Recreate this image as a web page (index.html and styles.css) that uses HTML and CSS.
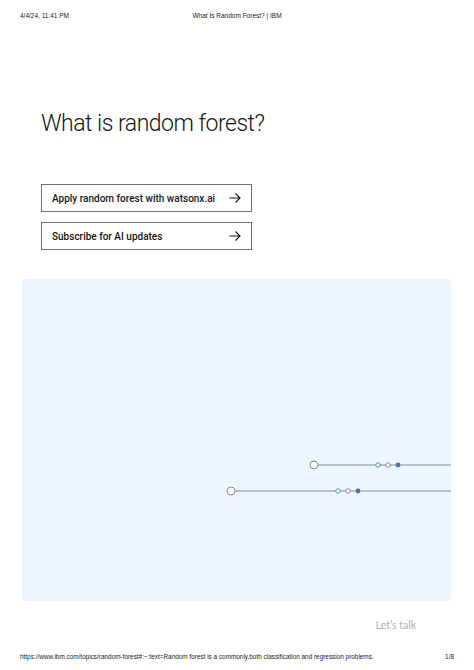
FILE: index.html
```html
<!DOCTYPE html>
<html>
<head>
<meta charset="utf-8">
<link rel="stylesheet" href="styles.css">
</head>
<body>
<div class="page">
  <header class="print-head">
    <span class="date">4/4/24, 11:41 PM</span>
    <span class="doc-title">What Is Random Forest? | IBM</span>
    <span class="spacer"></span>
  </header>
  <main class="content">
    <h1 class="title">What is random forest?</h1>
    <div class="actions">
      <a class="cta" href="#"><span>Apply random forest with watsonx.ai</span>
        <svg class="arrow" width="12" height="10" viewBox="0 0 12 10"><path d="M0.5 5H11M6.5 0.5L11 5L6.5 9.5" fill="none" stroke="#161616" stroke-width="1.1"/></svg></a>
      <a class="cta" href="#"><span>Subscribe for AI updates</span>
        <svg class="arrow" width="12" height="10" viewBox="0 0 12 10"><path d="M0.5 5H11M6.5 0.5L11 5L6.5 9.5" fill="none" stroke="#161616" stroke-width="1.1"/></svg></a>
    </div>
    <div class="hero">
      <svg class="lines" width="429" height="322" viewBox="0 0 429 322">
        <line x1="296" y1="186" x2="429" y2="186" stroke="#8d8d8d" stroke-width="1"/>
        <circle cx="292" cy="186" r="4" fill="#fff" stroke="#8d8d8d" stroke-width="1"/>
        <circle cx="356" cy="186" r="2.2" fill="#fff" stroke="#3f9f9a" stroke-width="1"/>
        <circle cx="366" cy="186" r="2.2" fill="#fff" stroke="#8d8d8d" stroke-width="1"/>
        <circle cx="376" cy="186" r="2.4" fill="#4a6fb5"/>
        <line x1="213" y1="212" x2="429" y2="212" stroke="#8d8d8d" stroke-width="1"/>
        <circle cx="209" cy="212" r="4" fill="#fff" stroke="#8d8d8d" stroke-width="1"/>
        <circle cx="316" cy="212" r="2.2" fill="#fff" stroke="#3f9f9a" stroke-width="1"/>
        <circle cx="326" cy="212" r="2.2" fill="#fff" stroke="#8d8d8d" stroke-width="1"/>
        <circle cx="336" cy="212" r="2.4" fill="#4a6fb5"/>
      </svg>
    </div>
    <div class="talk-row"><span class="talk">Let’s talk</span></div>
  </main>
  <footer class="print-foot">
    <span>https://www.ibm.com/topics/random-forest#:~:text=Random forest is a commonly,both classification and regression problems.</span>
    <span>1/8</span>
  </footer>
</div>
</body>
</html>
```
FILE: styles.css
```css
html, body {
  margin: 0;
  padding: 0;
  background: #fff;
}
.page {
  width: 474px;
  height: 670px;
  display: flex;
  flex-direction: column;
  font-family: "Liberation Sans", Arial, sans-serif;
}
.print-head {
  height: 30px;
  padding: 0 20px;
  display: grid;
  grid-template-columns: 1fr auto 1fr;
  align-items: center;
  font-size: 6.5px;
  color: #222;
}
.content {
  flex: 1;
  display: flex;
  flex-direction: column;
}
.title {
  margin: 80px 0 0 41px;
  font-family: Roboto, sans-serif;
  font-weight: 300;
  font-size: 23px;
  letter-spacing: -0.5px;
  line-height: 28px;
  color: #161616;
}
.actions {
  margin: 46px 0 0 41px;
  display: flex;
  flex-direction: column;
  gap: 10px;
}
.cta {
  width: 211px;
  height: 28px;
  box-sizing: border-box;
  border: 1px solid #6f6f6f;
  display: flex;
  align-items: center;
  justify-content: space-between;
  padding: 0 10px 0 10px;
  text-decoration: none;
  color: #161616;
  font-family: Roboto, sans-serif;
  font-weight: 500;
  font-size: 10px;
  white-space: nowrap;
}
.arrow { display: block; }
.hero {
  margin: 29px 0 0 22px;
  width: 429px;
  height: 322px;
  background: #edf5ff;
}
.lines { display: block; }
.talk-row {
  display: flex;
  justify-content: flex-end;
  padding: 18px 58px 0 0;
}
.talk {
  font-family: Lato, sans-serif;
  font-size: 10.5px;
  color: #b0b0b0;
}
.print-foot {
  height: 28px;
  padding: 0 20px;
  display: flex;
  justify-content: space-between;
  align-items: center;
  font-size: 6.4px;
  color: #222;
}
```
